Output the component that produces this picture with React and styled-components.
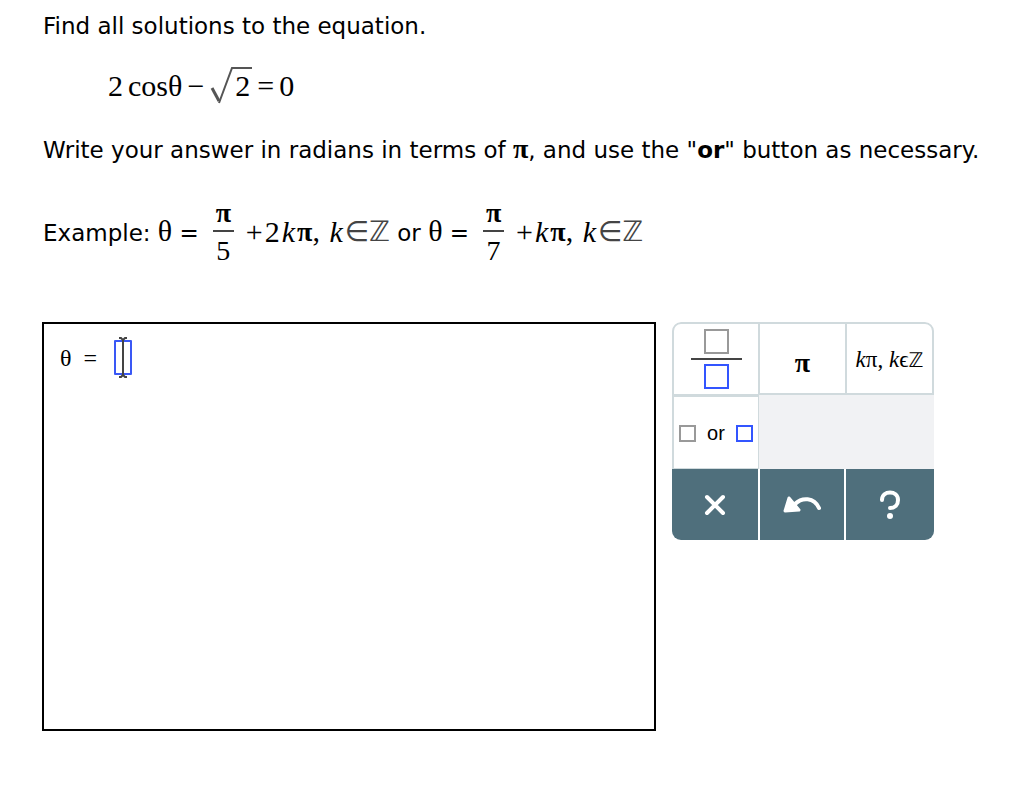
import React, { useState } from 'react';
import styled, { createGlobalStyle } from 'styled-components';

const GlobalStyle = createGlobalStyle`
  * { box-sizing: border-box; }
  body {
    margin: 0;
    background: #fff;
    color: #000;
    font-family: Verdana, "DejaVu Sans", sans-serif;
    font-size: 23px;
    line-height: 32px;
  }
`;

const serif = '"Liberation Serif", "Times New Roman", serif';

const Page = styled.main`
  padding: 10px 30px 62px 42px;
`;

const Prompt = styled.p`
  margin: 0;
  padding-left: 1px;
`;

const Equation = styled.div`
  display: flex;
  align-items: center;
  gap: 5px;
  margin: 24px 0 28px 66px;
  height: 40px;
  font-family: ${serif};
  font-size: 30px;
`;

const Radical = styled.span`
  display: flex;
  align-items: center;
`;

const RadicalSign = styled.svg`
  display: block;
  width: 24px;
  height: 40px;
`;

const Radicand = styled.span`
  height: 40px;
  padding: 4px 2px 0;
  background: linear-gradient(#555, #555) 0 1px / 100% 2px no-repeat;
`;

const Example = styled.div`
  display: flex;
  align-items: center;
  margin: 34px 0 58px;
  padding-left: 1px;
  height: 64px;
  white-space: pre;
`;

const Serif = styled.span`
  font-family: ${serif};
  font-size: 30px;
  line-height: 32px;
`;

const Pi = styled(Serif)`
  font-size: 28px;
  font-weight: bold;
  line-height: 28px;
`;

const Variable = styled.i`
  font-family: ${serif};
  font-size: 30px;
`;

const MathSymbol = styled.span`
  color: #444;
  font-family: "DejaVu Sans", sans-serif;
  font-size: 28px;
`;

const Term = styled.span`
  display: flex;
  align-items: center;
  gap: 2px;
`;

const Fraction = styled.span`
  display: flex;
  flex-direction: column;
  align-items: center;
  width: 21px;
  margin: 0 12px 0 14px;
  font-family: ${serif};
  font-size: 28px;
`;

const Numerator = styled.span`
  width: 100%;
  height: 32px;
  border-bottom: 2px solid #444;
  font-weight: bold;
  line-height: 26px;
  text-align: center;
`;

const Denominator = styled.span`
  height: 32px;
  line-height: 38px;
`;

const Workspace = styled.section`
  display: flex;
  align-items: flex-start;
  gap: 16px;
  margin-right: 60px;
`;

const AnswerArea = styled.div`
  display: flex;
  flex: 1;
  align-items: flex-start;
  min-height: 409px;
  padding: 14px 16px;
  border: 2px solid #000;
`;

const AnswerLabel = styled.label`
  margin-right: 17px;
  font-family: ${serif};
  font-size: 24px;
  line-height: 40px;
`;

const Blank = styled.span`
  position: relative;
  display: block;
  width: 18px;
  height: 40px;
  padding-top: 2px;
`;

const BlankInput = styled.input`
  display: block;
  width: 18px;
  height: 35px;
  padding: 0;
  border: 2px solid #3a58f5;
  border-radius: 1px;
  outline: none;
  background: transparent;
  caret-color: transparent;
`;

const Caret = styled.svg`
  position: absolute;
  top: -1px;
  left: 0;
  width: 18px;
  height: 42px;
  pointer-events: none;
`;

const Palette = styled.div`
  display: grid;
  grid-template-columns: 87px 87px 88px;
  grid-template-rows: 73px 74px 71px;
  overflow: hidden;
  border-radius: 9px;
  background: #f1f2f4;
`;

const Key = styled.button`
  display: flex;
  align-items: center;
  justify-content: center;
  padding: 0;
  border: 2px solid #d0dadd;
  border-width: ${(p) => p.$edges || '2px 1px'};
  border-radius: ${(p) => p.$corner || 0};
  background: #fff;
  color: #000;
  cursor: pointer;
`;

const PiKey = styled(Key)`
  padding-top: 8px;
`;

const StackKey = styled(Key)`
  flex-direction: column;
  gap: 4px;
`;

const OrKey = styled(Key)`
  gap: 11px;
  padding-top: 2px;
  font-family: "Liberation Sans", Arial, sans-serif;
  font-size: 20px;
`;

const Slot = styled.span`
  width: ${(p) => p.$size}px;
  height: ${(p) => p.$size}px;
  border: 2px solid ${(p) => (p.$active ? '#3355ff' : '#999')};
`;

const Bar = styled.span`
  width: 51px;
  height: 2px;
  background: #444;
`;

const SetKey = styled(Key)`
  padding-top: 2px;
  font-family: ${serif};
  font-size: 23px;
  white-space: pre;
`;

const SetSymbol = styled.i`
  font-family: "DejaVu Sans", sans-serif;
  font-size: 20px;
`;

const ActionBar = styled.div`
  display: grid;
  grid-column: 1 / -1;
  grid-template-columns: 86px 84px 88px;
  gap: 2px;
  background: #fff;
`;

const Action = styled.button`
  display: flex;
  align-items: center;
  justify-content: center;
  padding: 0;
  border: 0;
  background: #4f6f7c;
  cursor: pointer;
`;

const PiFraction = ({ over }) => (
  <Fraction>
    <Numerator>π</Numerator>
    <Denominator>{over}</Denominator>
  </Fraction>
);

const PiMultiple = ({ factor }) => (
  <Term>
    <Serif>+</Serif>
    {factor && <Serif>{factor}</Serif>}
    <Variable>k</Variable>
    <span><Pi>π</Pi><Serif>, </Serif></span>
    <Variable>k</Variable>
    <span>
      <MathSymbol>∈</MathSymbol>
      <MathSymbol>ℤ</MathSymbol>
    </span>
  </Term>
);

export default function App() {
  const [answer, setAnswer] = useState('');
  return (
    <>
      <GlobalStyle />
      <Page>
        <Prompt>Find all solutions to the equation.</Prompt>
        <Equation>
          <span>2</span>
          <span>cosθ</span>
          <span>−</span>
          <Radical>
            <RadicalSign viewBox="0 0 24 40" fill="none" stroke="#555" aria-hidden="true">
              <path d="M3 22 L10 35" strokeWidth="3" />
              <path d="M10 37 L23 2 H24" strokeWidth="2" />
            </RadicalSign>
            <Radicand>2</Radicand>
          </Radical>
          <span>=</span>
          <span>0</span>
        </Equation>
        <Prompt>
          Write your answer in radians in terms of <Pi>π</Pi>, and use the "<b>or</b>" button as necessary.
        </Prompt>
        <Example>
          <span>Example: <Serif>θ</Serif> =</span>
          <PiFraction over="5" />
          <PiMultiple factor="2" />
          <span> or <Serif>θ</Serif> =</span>
          <PiFraction over="7" />
          <PiMultiple />
        </Example>
        <Workspace>
          <AnswerArea>
            <AnswerLabel htmlFor="answer">θ&nbsp; =</AnswerLabel>
            <Blank>
              <BlankInput id="answer" value={answer} onChange={(e) => setAnswer(e.target.value)} />
              <Caret viewBox="0 0 18 42" fill="none" stroke="#444" aria-hidden="true">
                <path d="M9 2 V39" strokeWidth="2" />
                <path d="M5 1 H7 L9 3 L11 1 H13 M5 40 H7 L9 38 L11 40 H13" strokeWidth="2" />
              </Caret>
            </Blank>
          </AnswerArea>
          <Palette>
            <StackKey type="button" aria-label="Fraction" $edges="2px 1px 1px 2px" $corner="9px 0 0 0">
              <Slot $size={25} />
              <Bar />
              <Slot $size={25} $active />
            </StackKey>
            <PiKey type="button" $edges="2px 1px 2px 1px"><Pi>π</Pi></PiKey>
            <SetKey type="button" $edges="2px 2px 2px 1px" $corner="0 9px 0 0">
              <i>k</i>π, <i>k</i>ϵ<SetSymbol>ℤ</SetSymbol>
            </SetKey>
            <OrKey type="button" $edges="2px 1px 1px 2px">
              <Slot $size={17} />
              or
              <Slot $size={17} $active />
            </OrKey>
            <ActionBar>
              <Action type="button" aria-label="Clear">
                <svg width="22" height="22" viewBox="0 0 22 22" stroke="#fff" strokeWidth="4" strokeLinecap="round">
                  <path d="M3 3 L19 19 M19 3 L3 19" />
                </svg>
              </Action>
              <Action type="button" aria-label="Undo">
                <svg width="38" height="18" viewBox="0 0 38 18" fill="none">
                  <path d="M12 8 C19 1 31 1 36 12" stroke="#fff" strokeWidth="4" strokeLinecap="round" />
                  <path d="M6 2 L16 14 L2 15 Z" fill="#fff" stroke="#fff" strokeWidth="3" strokeLinejoin="round" />
                </svg>
              </Action>
              <Action type="button" aria-label="Help">
                <svg width="22" height="30" viewBox="0 0 22 30" fill="none">
                  <path d="M3 10 C3 0 19 0 19 10 C19 15 16 18 11 18" stroke="#fff" strokeWidth="4" strokeLinecap="round" />
                  <circle cx="11" cy="26" r="3" fill="#fff" />
                </svg>
              </Action>
            </ActionBar>
          </Palette>
        </Workspace>
      </Page>
    </>
  );
}
